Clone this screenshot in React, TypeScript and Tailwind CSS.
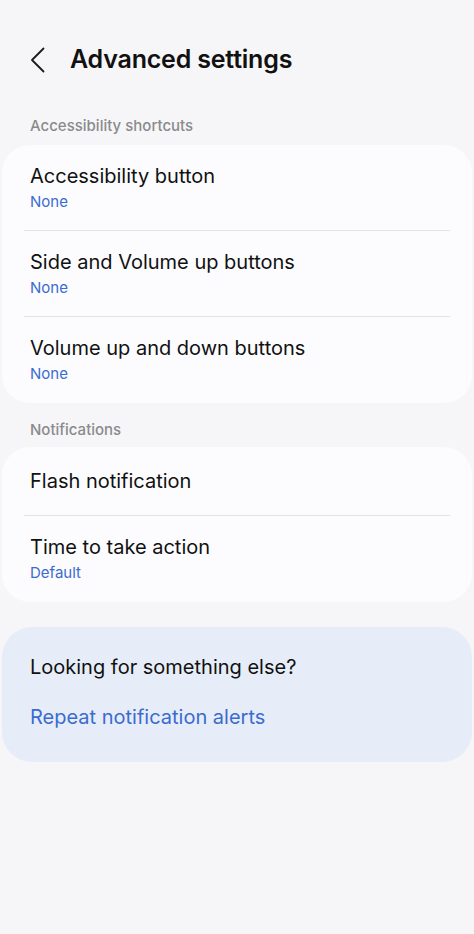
interface RowProps {
    title: string;
    sub?: string;
    last?: boolean;
}

const Row = ({ title, sub, last }: RowProps) => {
    return (
        <div className="px-[22px]">
            <div className={`flex flex-col justify-center px-[6px] ${sub ? "h-[86px] pb-[1px]" : "h-[69px]"} ${last ? "" : "border-b border-[#e3e3e6]"}`}>
                <div className="text-[20px] leading-[26px] text-[#111111]">{title}</div>
                {sub && <div className="text-[15px] leading-[20px] mt-[3px] text-[#3b6bcf]">{sub}</div>}
            </div>
        </div>
    );
};

export default function App() {
    return (
        <div className="min-h-[934px] w-full bg-[#f6f6f8] font-['Inter',sans-serif] px-[2px] pt-[32px]">
            {/* Header */}
            <div className="flex items-center h-[56px] pl-[28px]">
                <svg width="16" height="26" viewBox="0 0 16 26" fill="none">
                    <path d="M13.5 1.5 L2 13 L13.5 24.5" stroke="#1c1c1c" strokeWidth="1.8" strokeLinecap="round" strokeLinejoin="round" />
                </svg>
                <h1 className="ml-[24px] text-[25px] font-semibold text-[#111111] tracking-[-0.2px]">Advanced settings</h1>
            </div>

            {/* Accessibility shortcuts */}
            <div className="mt-[28px] mb-[9px] pl-[28px] text-[15px] leading-[20px] font-medium text-[#8a8a8c]">Accessibility shortcuts</div>
            <div className="bg-[#fcfcfe] rounded-[28px] overflow-hidden">
                <Row title="Accessibility button" sub="None" />
                <Row title="Side and Volume up buttons" sub="None" />
                <Row title="Volume up and down buttons" sub="None" last />
            </div>

            {/* Notifications */}
            <div className="mt-[17px] mb-[7px] pl-[28px] text-[15px] leading-[20px] font-medium text-[#8a8a8c]">Notifications</div>
            <div className="bg-[#fcfcfe] rounded-[28px] overflow-hidden">
                <Row title="Flash notification" />
                <Row title="Time to take action" sub="Default" last />
            </div>

            {/* Suggestions */}
            <div className="mt-[25px] bg-[#e6edf8] rounded-[30px] px-[28px] pt-[27px] pb-[32px]">
                <div className="text-[20px] leading-[26px] text-[#111111]">Looking for something else?</div>
                <div className="mt-[24px] text-[20px] leading-[26px] text-[#3b6bcf]">Repeat notification alerts</div>
            </div>
        </div>
    );
}
